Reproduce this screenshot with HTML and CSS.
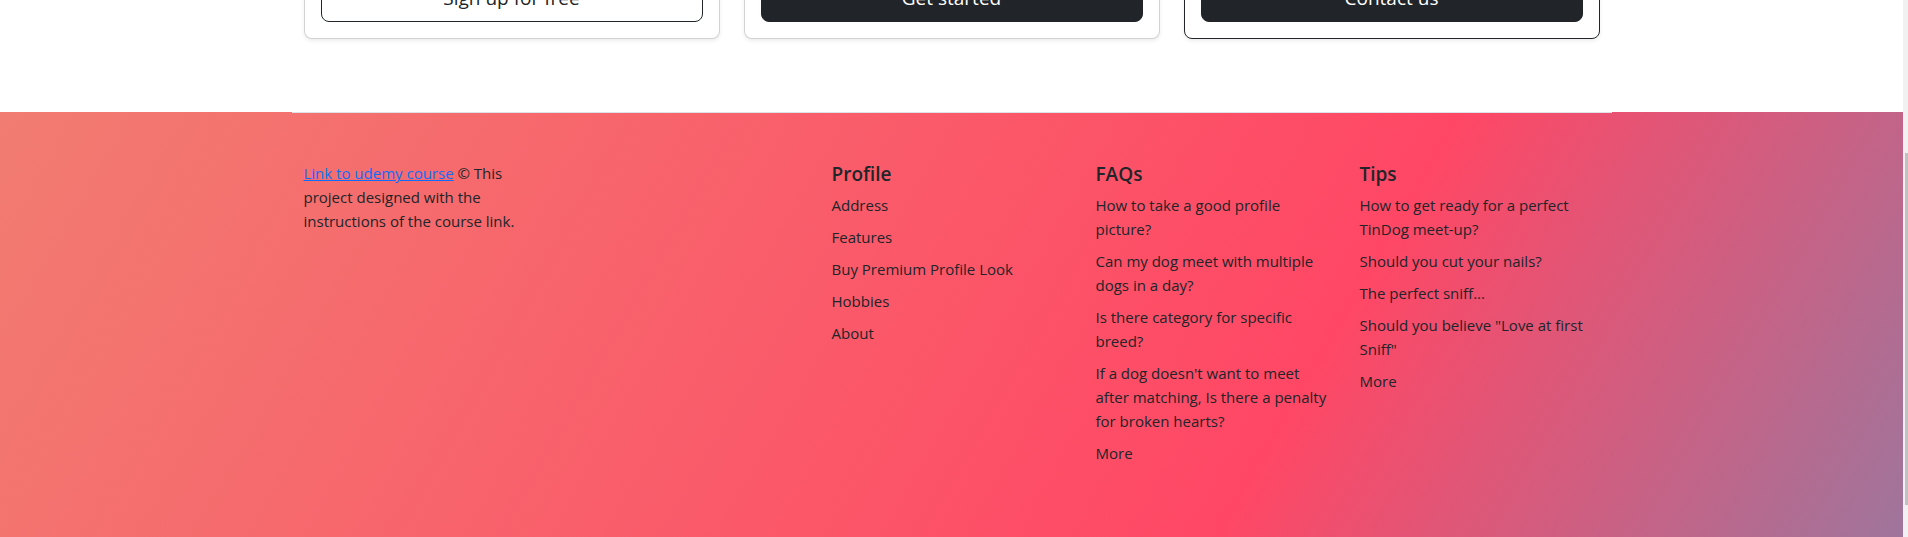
FILE: index.html
```html
<!DOCTYPE html>
<html lang="en">
<head>
<meta charset="utf-8">
<title>TinDog</title>
<link rel="stylesheet" href="styles.css">
</head>
<body>
<div class="page">
  <div class="main">
    <section class="pricing container">
      <div class="row">
        <div class="col">
          <div class="card"><div class="card-body"><button class="btn btn-outline">Sign up for free</button></div></div>
        </div>
        <div class="col">
          <div class="card"><div class="card-body"><button class="btn btn-dark">Get started</button></div></div>
        </div>
        <div class="col">
          <div class="card card-dark"><div class="card-body"><button class="btn btn-dark">Contact us</button></div></div>
        </div>
      </div>
    </section>
    <div class="footer-bg">
      <footer class="container footer">
        <div class="row">
          <div class="col">
            <p class="about"><a class="course-link" href="#">Link to udemy course</a> © This project designed with the instructions of the course link.</p>
          </div>
          <div class="col"></div>
          <div class="col">
            <h5>Profile</h5>
            <ul class="links">
              <li><a href="#">Address</a></li>
              <li><a href="#">Features</a></li>
              <li><a href="#">Buy Premium Profile Look</a></li>
              <li><a href="#">Hobbies</a></li>
              <li><a href="#">About</a></li>
            </ul>
          </div>
          <div class="col">
            <h5>FAQs</h5>
            <ul class="links">
              <li><a href="#">How to take a good profile picture?</a></li>
              <li><a href="#">Can my dog meet with multiple dogs in a day?</a></li>
              <li><a href="#">Is there category for specific breed?</a></li>
              <li><a href="#">If a dog doesn't want to meet after matching, Is there a penalty for broken hearts?</a></li>
              <li><a href="#">More</a></li>
            </ul>
          </div>
          <div class="col">
            <h5>Tips</h5>
            <ul class="links">
              <li><a href="#">How to get ready for a perfect TinDog meet-up?</a></li>
              <li><a href="#">Should you cut your nails?</a></li>
              <li><a href="#">The perfect sniff...</a></li>
              <li><a href="#">Should you believe "Love at first Sniff"</a></li>
              <li><a href="#">More</a></li>
            </ul>
          </div>
        </div>
      </footer>
    </div>
  </div>
  <div class="scrollbar"><div class="thumb"></div></div>
</div>
</body>
</html>
```

FILE: styles.css
```css
html, body {
  margin: 0;
  height: 100%;
  overflow: hidden;
}

body {
  font-family: "Open Sans", "Noto Sans", sans-serif;
  font-size: 15px;
  line-height: 24px;
  color: #212529;
  background: #fff;
}

.page {
  display: flex;
  height: 537px;
}

.main {
  flex: 1;
  min-width: 0;
  display: flex;
  flex-direction: column;
}

.scrollbar {
  width: 5px;
  background: #f1f1f1;
  display: flex;
  flex-direction: column;
  align-items: flex-end;
  padding: 153px 0 32px;
  box-sizing: border-box;
}

.thumb {
  flex: 1;
  width: 3px;
  background: #c1c1c1;
}

.container {
  width: 100%;
  max-width: 1320px;
  margin: 0 auto;
  padding: 0 12px;
  box-sizing: border-box;
}

.row {
  display: flex;
  margin: 0 -12px;
}

.row > .col {
  flex: 1 0 0;
  min-width: 0;
  padding: 0 12px;
  box-sizing: border-box;
}

.pricing {
  margin-top: -43px;
  margin-bottom: 49px;
}

.card {
  background: #fff;
  border: 1px solid rgba(0, 0, 0, 0.175);
  border-radius: 8px;
  box-shadow: 0 2px 4px rgba(0, 0, 0, 0.075);
  margin-bottom: 24px;
}

.card-dark {
  border-color: #212529;
}

.card-body {
  padding: 16px;
}

.btn {
  display: block;
  width: 100%;
  font-family: inherit;
  font-size: 19px;
  line-height: 30px;
  padding: 8px 16px;
  border: 1px solid #212529;
  border-radius: 8px;
  box-sizing: border-box;
  text-align: center;
}

.btn-outline {
  background: transparent;
  color: #212529;
}

.btn-dark {
  background: #212529;
  color: #fff;
}

.footer-bg {
  flex: 1;
  background: linear-gradient(120deg, #f17c71 0%, #ff4765 68%, #9f759c 100%);
}

.footer {
  border-top: 1px solid #dee2e6;
  padding-top: 48px;
}

.about {
  margin: 0;
}

.course-link {
  color: #0d6efd;
  text-decoration: underline;
}

.footer h5 {
  font-size: 19px;
  font-weight: 600;
  line-height: 26px;
  margin: 0 0 6px;
  color: #212529;
}

.links {
  list-style: none;
  margin: 0;
  padding: 0;
}

.links li {
  margin-bottom: 8px;
}

.links a {
  color: #212529;
  text-decoration: none;
}
```
